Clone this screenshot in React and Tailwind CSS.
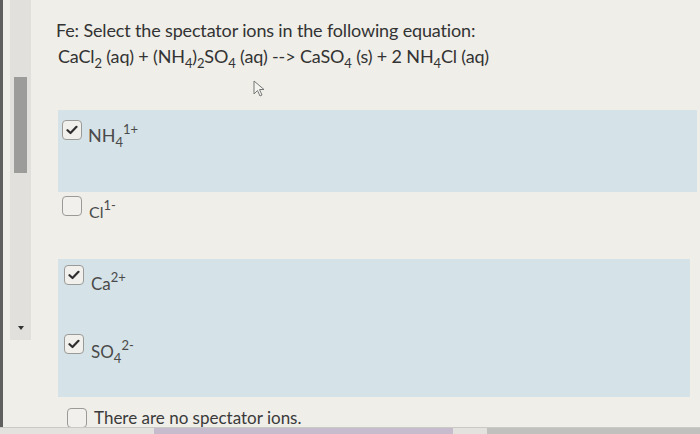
import React from "react";

function Box({ checked }) {
  return (
    <div className="w-[20px] h-[20px] shrink-0 rounded-[4px] border-[1.5px] border-[#9a9a98] bg-[#f1f0ec] flex items-center justify-center">
      {checked && (
        <svg width="12" height="10" viewBox="0 0 12 10">
          <path d="M1.5 5.2 L4.5 8 L10.5 1.8" fill="none" stroke="#2e2e2e" strokeWidth="2.2" strokeLinecap="round" strokeLinejoin="round" />
        </svg>
      )}
    </div>
  );
}

function Sub({ children }) {
  return <span className="text-[13px] relative top-[5px]">{children}</span>;
}
function Sup({ children }) {
  return <span className="text-[13px] relative top-[-8px]">{children}</span>;
}

export default function App() {
  return (
    <div
      className="w-[700px] h-[434px] bg-[#efeee9] flex overflow-hidden relative text-[#3a3a3a]"
      style={{ fontFamily: "Lato, 'Open Sans', sans-serif" }}
    >
      <div className="w-[3px] bg-[#5f5f5f] shrink-0" />
      <div className="w-[7px] shrink-0" />
      <div className="w-[21px] shrink-0 h-[340px] bg-[#e1e0dc] flex flex-col items-center">
        <div className="mt-[77px] w-[13px] h-[96px] bg-[#9c9c9a]" />
        <div className="mt-auto mb-[10px] w-0 h-0 border-l-[3px] border-r-[3px] border-t-[4px] border-l-transparent border-r-transparent border-t-[#333]" />
      </div>
      <div className="flex-1 flex flex-col">
        <div className="pl-[25px] pt-[17px] text-[18px] leading-[26px] tracking-[-0.15px] text-[#333]">
          <div>Fe: Select the spectator ions in the following equation:</div>
          <div className="pl-[2px]">
            CaCl<Sub>2</Sub> (aq) + (NH<Sub>4</Sub>)<Sub>2</Sub>SO<Sub>4</Sub> (aq) --&gt; CaSO<Sub>4</Sub> (s) + 2 NH<Sub>4</Sub>Cl (aq)
          </div>
        </div>
        <div className="mt-[39px] ml-[27px] mr-[3px] flex flex-col text-[18px] text-[#4a4a4a]">
          <div className="h-[82px] bg-[#d5e2e7] pl-[4px] pt-[10px] flex items-start gap-[6px]">
            <Box checked />
            <div className="mt-[2px]">NH<Sub>4</Sub><Sup>1+</Sup></div>
          </div>
          <div className="h-[67px] pl-[4px] pt-[4px] flex items-start gap-[7px]">
            <Box />
            <div className="mt-[4px] text-[16px]">Cl<Sup>1-</Sup></div>
          </div>
          <div className="mr-[7px] bg-[#d5e2e7]">
            <div className="h-[69px] pl-[6px] pt-[6px] flex items-start gap-[7px]">
              <Box checked />
              <div className="mt-[6px] text-[17px]">Ca<Sup>2+</Sup></div>
            </div>
            <div className="h-[69px] pl-[6px] pt-[6px] flex items-start gap-[7px]">
              <Box checked />
              <div className="mt-[5px] text-[17px]">SO<Sub>4</Sub><Sup>2-</Sup></div>
            </div>
          </div>
          <div className="pl-[9px] pt-[8px] flex items-center gap-[7px]">
            <Box />
            <div className="text-[17px] text-[#3a3a3a]">There are no spectator ions.</div>
          </div>
        </div>
      </div>
      <div className="absolute left-0 right-0 bottom-0 h-[7px] flex border-t border-[#c9c9c6]">
        <div className="w-[154px] bg-[#e3e2de]" />
        <div className="w-[299px] bg-[#c6bccd]" />
        <div className="w-[34px] bg-[#e3e2de]" />
        <div className="flex-1 bg-[#c0c0be]" />
      </div>
      <svg className="absolute left-[253px] top-[80px]" width="14" height="18" viewBox="0 0 14 18">
        <path d="M1 1 L1 14 L4.5 10.5 L7 16 L9 15 L6.5 9.5 L11 9.5 Z" fill="#f4f4f0" stroke="#777" strokeWidth="1" strokeLinejoin="round" />
      </svg>
    </div>
  );
}
